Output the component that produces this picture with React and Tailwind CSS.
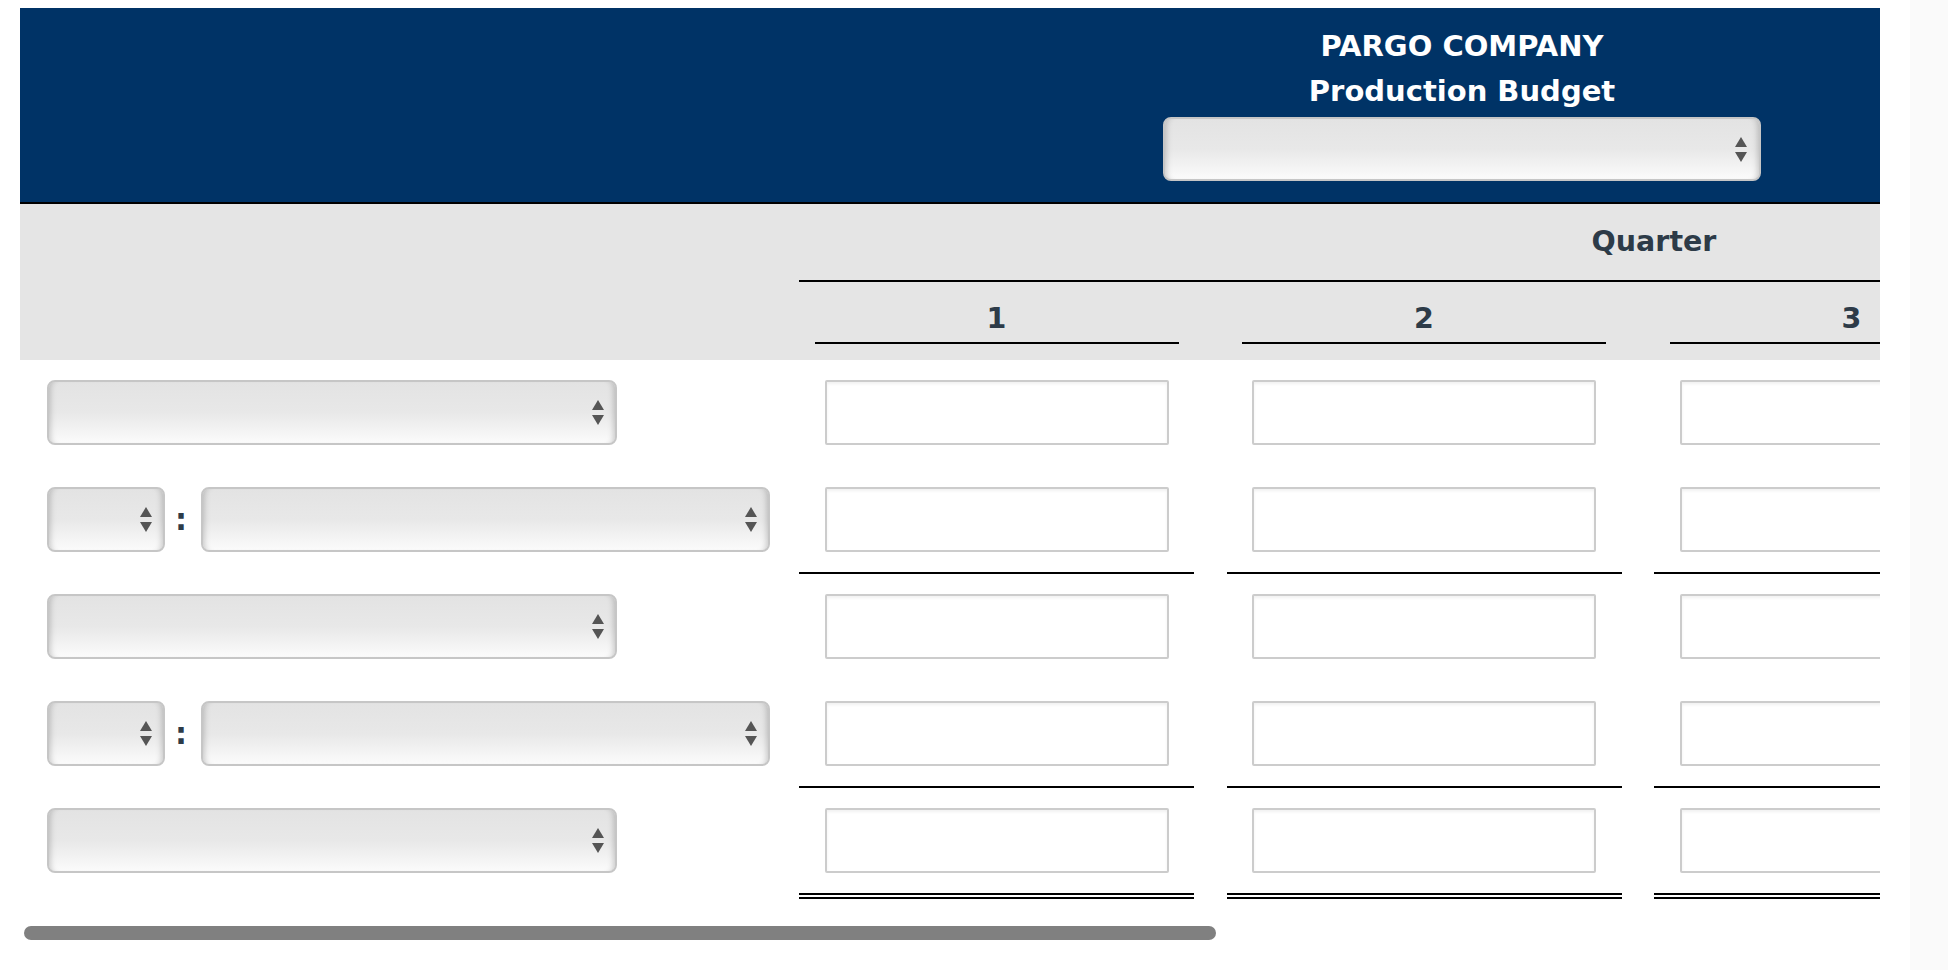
import React from "react";

// up / down arrows drawn on the right of each dropdown
const Arrows = () => (
  <svg width="12" height="25" viewBox="0 0 12 25" className="shrink-0">
    <polygon points="6,0 12,10 0,10" fill="#555555" />
    <polygon points="0,15 12,15 6,25" fill="#555555" />
  </svg>
);

const Dropdown = ({ className }) => (
  <div
    className={`${className} flex items-center justify-end rounded-[8px] border-2 border-[#c6c6c6] bg-[linear-gradient(to_bottom,#e3e3e3_0%,#e8e8e8_50%,#fbfbfb_100%)] pr-[11px] shadow-[inset_7px_0_6px_-6px_rgba(0,0,0,0.22),inset_-7px_0_6px_-6px_rgba(0,0,0,0.22)]`}
  >
    <Arrows />
  </div>
);

const Field = () => (
  <input
    type="text"
    className="mx-auto block h-[65px] w-[344px] rounded-[2px] border-2 border-[#cccccc] bg-white shadow-[inset_0_2px_3px_rgba(0,0,0,0.06)] outline-none"
  />
);

const columns = ["1", "2", "3", "4", "Year"];

const rows = [
  { kind: "single", rule: "none" },
  { kind: "pair", rule: "single" },
  { kind: "single", rule: "none" },
  { kind: "pair", rule: "single" },
  { kind: "single", rule: "double" },
];

const cellClass = (rule, last) => {
  const gap = last ? "" : " mr-[32.5px]";
  if (rule === "single") return "w-[395px] shrink-0 pt-[20px] pb-[20px] border-b-2 border-black" + gap;
  if (rule === "double") return "w-[395px] shrink-0 pt-[20px] pb-[20px] border-b-[6px] border-double border-black" + gap;
  return "w-[395px] shrink-0 pt-[20px] pb-[22px]" + gap;
};

const App = () => {
  return (
    <div className="flex h-[970px] w-[1948px] overflow-hidden bg-white font-['DejaVu_Sans',Verdana,sans-serif]">
      <div className="w-[1910px] shrink-0 pl-[20px] pt-[8px]">
        <div className="w-[1860px] overflow-hidden">
          <div className="w-[2884px]">
            {/* Title block */}
            <div className="flex flex-col items-center border-b-2 border-black bg-[#003366] pt-[15.5px] pb-[21px]">
              <div className="text-center text-[29px] font-bold leading-[45px] text-white">
                PARGO COMPANY
                <br />
                Production Budget
              </div>
              <Dropdown className="mt-[3.5px] h-[64px] w-[598px] pr-[12px]" />
            </div>

            {/* Column headings */}
            <div className="bg-[#e5e5e5] pb-[16px] text-[28.5px] font-bold leading-[34px] text-[#2d3b48]">
              <div className="flex">
                <div className="w-[779px] shrink-0" />
                <div className="w-[1710px] shrink-0 border-b-2 border-black pt-[21px] pb-[21px] text-center">
                  Quarter
                </div>
              </div>
              <div className="flex">
                <div className="w-[779px] shrink-0" />
                {columns.map((c, i) => (
                  <div
                    key={c}
                    className={i === columns.length - 1 ? "w-[395px] shrink-0" : "w-[395px] shrink-0 mr-[32.5px]"}
                  >
                    <div className="mx-[15.5px] border-b-2 border-black pt-[20px] pb-[6px] text-center">{c}</div>
                  </div>
                ))}
              </div>
            </div>

            {/* Budget lines */}
            {rows.map((r, idx) => (
              <div key={idx} className="flex">
                <div className="flex w-[779px] shrink-0 items-start pl-[27px] pt-[20px]">
                  {r.kind === "single" ? (
                    <Dropdown className="h-[65px] w-[570px]" />
                  ) : (
                    <div className="flex items-center">
                      <Dropdown className="h-[65px] w-[118px]" />
                      <div className="w-[36px] pr-[4px] text-center text-[30px] font-bold leading-[65px] text-[#2d3b48]">:</div>
                      <Dropdown className="h-[65px] w-[569px]" />
                    </div>
                  )}
                </div>
                {columns.map((c, i) => (
                  <div key={c} className={cellClass(r.rule, i === columns.length - 1)}>
                    <Field />
                  </div>
                ))}
              </div>
            ))}
          </div>
        </div>

        {/* horizontal scroll thumb */}
        <div className="ml-[4px] mt-[27px] h-[14px] w-[1192px] rounded-full bg-[#808080]" />
      </div>
      <div className="w-[38px] shrink-0 bg-[#fafafa]" />
    </div>
  );
};

export default App;
